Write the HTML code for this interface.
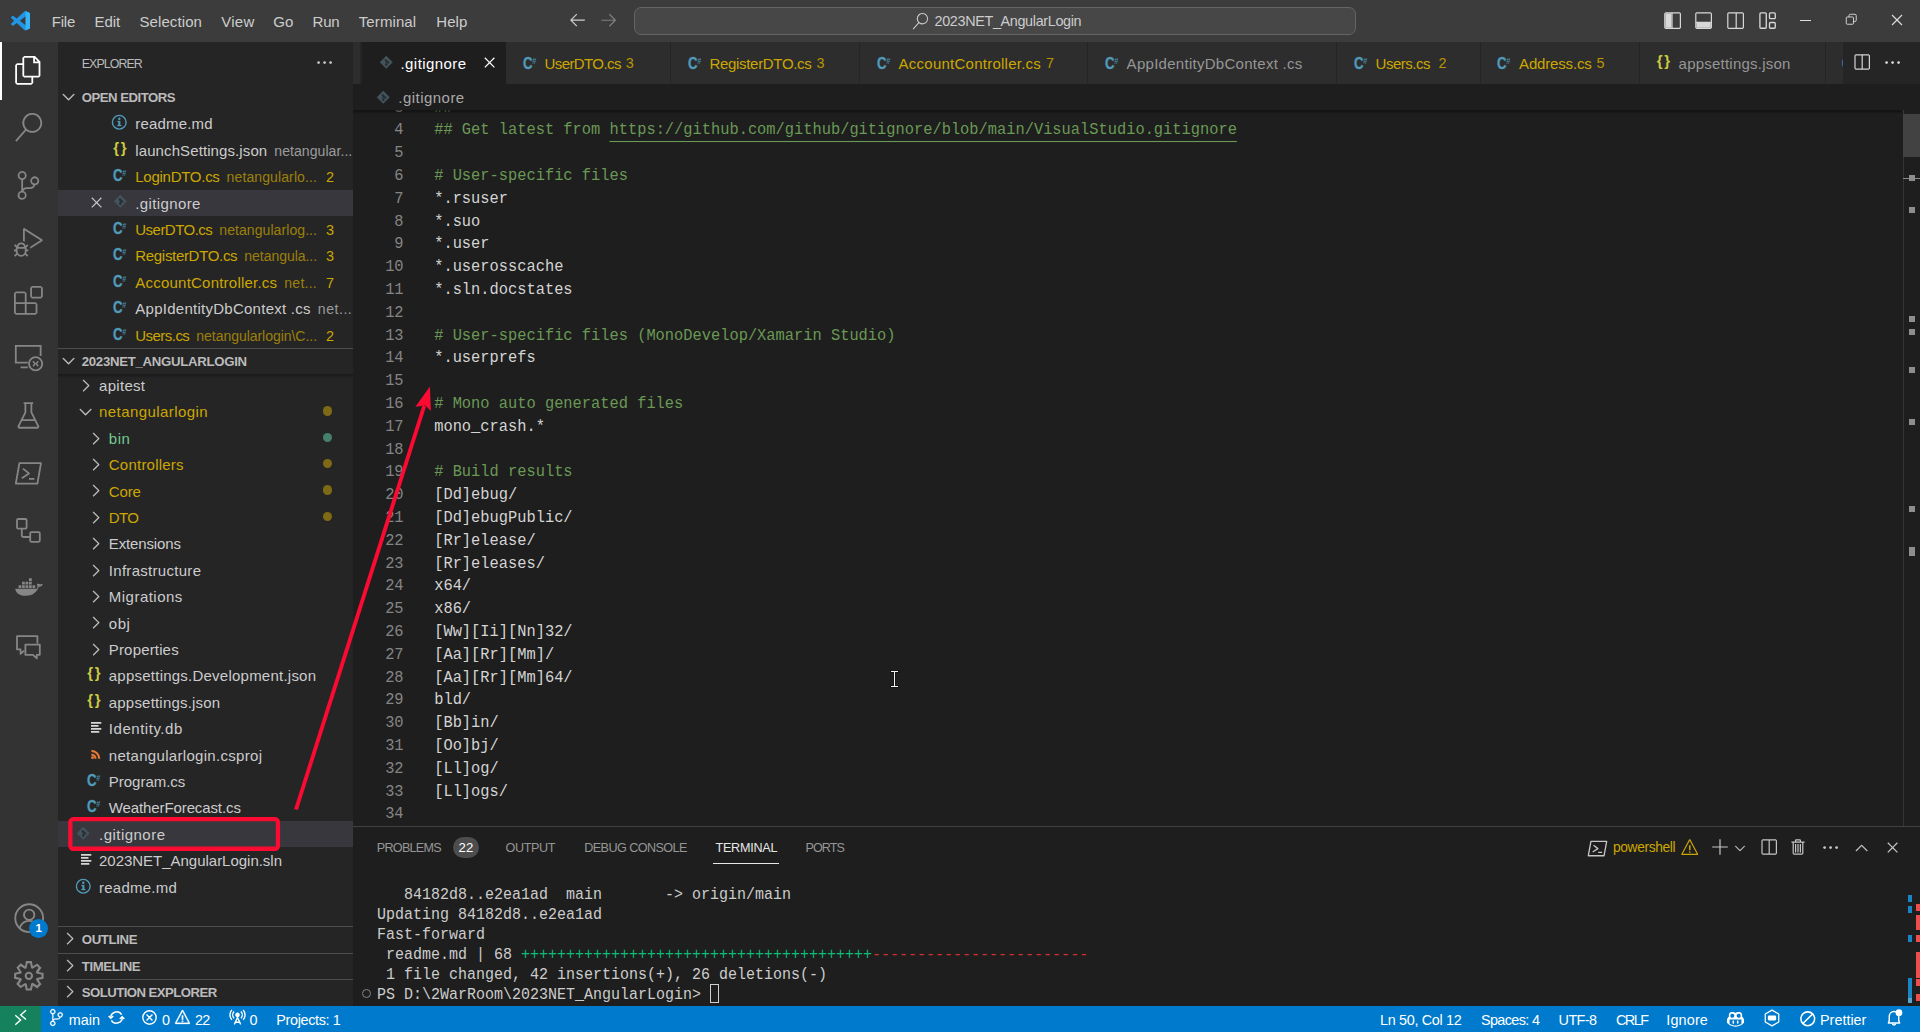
<!DOCTYPE html>
<html><head><meta charset="utf-8"><title>.gitignore - 2023NET_AngularLogin - Visual Studio Code</title>
<style>
*{box-sizing:border-box;margin:0;padding:0}
html,body{width:1920px;height:1032px;overflow:hidden;background:#1e1e1e}
body{position:relative;font-family:"Liberation Sans", sans-serif;font-size:15px;color:#ccc;-webkit-font-smoothing:antialiased}
.abs{position:absolute}
.t{position:absolute;white-space:pre;line-height:1}
.row{position:absolute;left:58px;width:295px;height:26.4px}
.row .t{top:1px;line-height:26.4px}
.tree .row .t{top:.7px}
.mono{font-family:"Liberation Mono", monospace}
.ln{position:absolute;left:353px;width:50.6px;text-align:right;color:#858585;font-family:"Liberation Mono", monospace;font-size:15.385px;line-height:22.800px;white-space:pre;transform:scaleY(1.1);transform-origin:50% 50%}
.cl{position:absolute;left:434.200px;color:#d4d4d4;font-family:"Liberation Mono", monospace;font-size:15.385px;line-height:22.800px;white-space:pre;transform:scaleY(1.1);transform-origin:0 50%}
.cm{color:#6a9955}
.tl{position:absolute;left:377px;color:#ccc;font-family:"Liberation Mono", monospace;font-size:15px;line-height:20px;white-space:pre;transform:scaleY(1.1);transform-origin:0 50%}
.sb{position:absolute;top:1005.600px;height:26.400px;line-height:28.600px;font-size:14.400px;color:#fff;white-space:pre}
.ci{font-weight:bold;color:#519aba;font-size:16.5px;letter-spacing:-.3px;margin-top:-4.1px;margin-left:.4px;transform:scaleX(.8);transform-origin:0 50%;-webkit-text-stroke:.35px #519aba}
.ci sup{font-size:9px;vertical-align:4.5px;margin-left:0;color:#4689a8;-webkit-text-stroke:0}
.js{font-weight:bold;color:#cbcb41;font-size:15px;letter-spacing:1.7px;margin-top:-3px;margin-left:.3px}
</style></head><body>

<div class="abs" style="left:0;top:0;width:1920px;height:42px;background:#3c3c3c"></div>
<svg viewBox="0 0 100 100" width="19.500" height="19.500" style="position:absolute;left:10.500px;top:11px"><path fill="#2196e6" fill-rule="evenodd" d="M70.912 99.317a6.223 6.223 0 0 0 4.960-.191l20.589-9.907A6.250 6.250 0 0 0 100 83.587V16.413a6.250 6.250 0 0 0-3.539-5.632L75.872.874a6.226 6.226 0 0 0-7.103 1.209L29.355 38.042L12.187 25.010a4.162 4.162 0 0 0-5.318.236l-5.506 5.009a4.168 4.168 0 0 0-.004 6.162L16.247 50L1.359 63.583a4.168 4.168 0 0 0 .004 6.162l5.506 5.009a4.162 4.162 0 0 0 5.318.236l17.168-13.032L68.769 97.917a6.217 6.217 0 0 0 2.143 1.400zM75.015 27.299L45.109 50l29.906 22.701V27.299z"></path><path fill="#35b5f7" d="M75.015 27.299V.6l.857.274l20.589 9.907A6.250 6.250 0 0 1 100 16.413v67.174a6.250 6.250 0 0 1-3.539 5.632L75.872 99.126l-.857.274z"></path></svg>
<span class="t mw" style="left: 51.75px; top: 14px; font-size: 15px; color: rgb(204, 204, 204); letter-spacing: -0.23px;">File</span>
<span class="t mw" style="left: 94.5px; top: 14px; font-size: 15px; color: rgb(204, 204, 204); letter-spacing: -0.09px;">Edit</span>
<span class="t mw" style="left: 139.5px; top: 14px; font-size: 15px; color: rgb(204, 204, 204); letter-spacing: 0.087px;">Selection</span>
<span class="t mw" style="left: 221.25px; top: 14px; font-size: 15px; color: rgb(204, 204, 204); letter-spacing: 0.25px;">View</span>
<span class="t mw" style="left: 273.25px; top: 14px; font-size: 15px; color: rgb(204, 204, 204); letter-spacing: -0.008px;">Go</span>
<span class="t mw" style="left: 312.5px; top: 14px; font-size: 15px; color: rgb(204, 204, 204); letter-spacing: -0.177px;">Run</span>
<span class="t mw" style="left: 358.75px; top: 14px; font-size: 15px; color: rgb(204, 204, 204); letter-spacing: 0.102px;">Terminal</span>
<span class="t mw" style="left: 436.25px; top: 14px; font-size: 15px; color: rgb(204, 204, 204); letter-spacing: 0.098px;">Help</span>
<svg viewBox="0 0 16 16" width="19.2" height="19.2" fill="currentColor" style="position:absolute;left:567.5px;top:10.3px;color:#d0d0d0;overflow:visible;"><path d="M7 3.093l-5 5V8.800l5 5l.707-.707l-4.146-4.147H14v-1H3.560L7.707 3.800L7 3.093z"></path></svg>
<svg viewBox="0 0 16 16" width="19.2" height="19.2" fill="currentColor" style="position:absolute;left:599px;top:10.3px;color:#7f7f7f;overflow:visible;"><path d="M9 13.887l5-5V8.180l-5-5l-.707.707l4.146 4.147H2v1h10.440L8.293 13.180l.707.707z"></path></svg>
<div class="abs" style="left:634px;top:7px;width:722px;height:27.600px;background:#474747;border:1px solid #646464;border-radius:7px"></div>
<svg viewBox="0 0 16 16" width="16.5" height="16.5" fill="currentColor" style="position:absolute;left:911.5px;top:12.5px;color:#ccc;overflow:visible;"><path d="M15.250 0a8.250 8.250 0 0 0-6.180 13.720L1 22.880l1.120 1l8.050-9.120A8.251 8.251 0 1 0 15.250.010V0zm0 15a6.750 6.750 0 1 1 0-13.500a6.750 6.750 0 0 1 0 13.500z" transform="scale(.6667)"></path></svg>
<span class="t mw" style="left: 934.5px; top: 14px; font-size: 14.4px; color: rgb(204, 204, 204); letter-spacing: -0.344px;">2023NET_AngularLogin</span>
<svg viewBox="0 0 16 16" width="19.2" height="19.2" fill="currentColor" style="position:absolute;left:1663px;top:11px;color:#d8d8d8;overflow:visible;"><path d="M2 1L1 2v12l1 1h12l1-1V2l-1-1H2zm0 13V2h5v12H2zm6 0V2h6v12H8z"></path><rect x="2" y="2" width="5" height="12"></rect></svg>
<svg viewBox="0 0 16 16" width="19.2" height="19.2" fill="currentColor" style="position:absolute;left:1694px;top:11px;color:#d8d8d8;overflow:visible;"><path d="M2 1L1 2v12l1 1h12l1-1V2l-1-1H2zm0 1h12v7H2V2zm0 12v-4h12v4H2z"></path><rect x="2" y="10" width="12" height="4"></rect></svg>
<svg viewBox="0 0 16 16" width="19.2" height="19.2" fill="currentColor" style="position:absolute;left:1725.8px;top:11px;color:#d8d8d8;overflow:visible;"><path d="M2 1L1 2v12l1 1h12l1-1V2l-1-1H2zm0 13V2h6v12H2zm7 0V2h5v12H9z"></path></svg>
<svg viewBox="0 0 16 16" width="19.2" height="19.2" fill="currentColor" style="position:absolute;left:1757.5px;top:11px;color:#d8d8d8;overflow:visible;"><g fill="none" stroke="currentColor" stroke-width="1.100"><rect x="1.600" y="1.600" width="5.300" height="12.800" rx=".8"></rect><rect x="9.600" y="1.600" width="4.800" height="4.800" rx=".8"></rect><rect x="9.600" y="9.600" width="4.800" height="4.800" rx=".8"></rect></g></svg>
<div class="abs" style="left:1800px;top:20px;width:10.500px;height:1px;background:#ddd"></div>
<svg viewBox="0 0 16 16" width="14.5" height="14.5" fill="currentColor" style="position:absolute;left:1843.7px;top:12.4px;color:#ddd;overflow:visible;"><g fill="none" stroke="currentColor" stroke-width="1"><rect x="2.500" y="5.500" width="8" height="8" rx="1"></rect><path d="M5.500 5.500v-1.500a1.500 1.500 0 0 1 1.500-1.500h5a1.500 1.500 0 0 1 1.500 1.500v5a1.500 1.500 0 0 1-1.500 1.500h-1.500"></path></g></svg>
<svg width="12" height="12" viewBox="0 0 12 12" style="position:absolute;left:1891.300px;top:14px"><path d="M1 1l10 10M11 1L1 11" stroke="#e0e0e0" stroke-width="1.100" fill="none"></path></svg>
<div class="abs" style="left:0;top:42px;width:58px;height:963.600px;background:#333"></div>
<div class="abs" style="left:0;top:42px;width:2.400px;height:57.600px;background:#fff"></div>
<svg viewBox="0 0 24 24" width="28.8" height="28.8" fill="currentColor" style="position:absolute;left:14.4px;top:55.599999999999994px;color:#fff;overflow:visible;"><path d="M17.5 0h-9L7 1.5V6H2.5L1 7.5v15.07L2.5 24h12.07L16 22.57V18h4.7l1.3-1.43V4.5L17.5 0zm0 2.12l2.38 2.38H17.5V2.12zm-3 20.38h-12v-15H7v9.07L8.5 18h6v4.5zm6-6h-12v-15H16V6h4.5v10.5z"></path></svg>
<svg viewBox="0 0 24 24" width="28.8" height="28.8" fill="currentColor" style="position:absolute;left:14.4px;top:113.2px;color:#868686;overflow:visible;"><path d="M15.25 0a8.25 8.25 0 0 0-6.18 13.72L1 22.88l1.12 1l8.05-9.12A8.251 8.251 0 1 0 15.25.01V0zm0 15a6.75 6.75 0 1 1 0-13.5a6.75 6.75 0 0 1 0 13.5z"></path></svg>
<svg viewBox="0 0 24 24" width="28.8" height="28.8" fill="currentColor" style="position:absolute;left:14.4px;top:170.8px;color:#868686;overflow:visible;"><path d="M21.007 8.222A3.738 3.738 0 0 0 15.045 5.2a3.737 3.737 0 0 0 1.156 6.583a2.988 2.988 0 0 1-2.668 1.67h-2.99a4.456 4.456 0 0 0-2.989 1.165V7.4a3.737 3.737 0 1 0-1.494 0v9.117a3.776 3.776 0 1 0 1.816.099a2.99 2.99 0 0 1 2.668-1.667h2.99a4.484 4.484 0 0 0 4.223-3.039a3.736 3.736 0 0 0 3.25-3.687zM4.565 3.738a2.242 2.242 0 1 1 4.484 0a2.242 2.242 0 0 1-4.484 0zm4.484 16.441a2.242 2.242 0 1 1-4.484 0a2.242 2.242 0 0 1 4.484 0zm8.221-9.715a2.242 2.242 0 1 1 0-4.485a2.242 2.242 0 0 1 0 4.485z"></path></svg>
<svg viewBox="0 0 24 24" width="28.8" height="28.8" fill="currentColor" style="position:absolute;left:14.4px;top:228.40000000000003px;color:#868686;overflow:visible;"><path d="M10.94 13.5l-1.32 1.32a3.73 3.73 0 0 0-7.24 0L1.06 13.5L0 14.56l1.72 1.72l-.22.22V18H0v1.5h1.5v.08c.077.489.214.966.41 1.42L0 22.94L1.06 24l1.65-1.65A4.308 4.308 0 0 0 6 24a4.31 4.31 0 0 0 3.29-1.65L10.94 24L12 22.94L10.09 21c.198-.464.336-.951.41-1.45v-.1H12V18h-1.5v-1.5l-.22-.22L12 14.56l-1.06-1.06zM6 13.5a2.25 2.25 0 0 1 2.25 2.25h-4.5A2.25 2.25 0 0 1 6 13.5zm3 6a3.33 3.33 0 0 1-3 3a3.33 3.33 0 0 1-3-3v-2.25h6v2.25zm14.76-9.9v1.26L13.5 17.37V15.6l8.5-5.37L9 2v9.46a5.07 5.07 0 0 0-1.5-.72V.63L8.64 0l15.12 9.6z"></path></svg>
<svg viewBox="0 0 24 24" width="28.8" height="28.8" fill="currentColor" style="position:absolute;left:14.4px;top:286.0px;color:#868686;overflow:visible;"><path d="M13.5 1.5L15 0h7.5L24 1.5V9l-1.5 1.5H15L13.5 9V1.5zm1.5 0V9h7.5V1.5H15zM0 15V6l1.5-1.5H9L10.5 6v7.5H18l1.5 1.5v7.5L18 24H1.5L0 22.5V15zm9-1.5V6H1.5v7.5H9zM9 15H1.5v7.5H9V15zm1.5 7.5H18V15h-7.5v7.5z"></path></svg>
<svg viewBox="0 0 24 24" width="28.8" height="28.8" fill="currentColor" style="position:absolute;left:14.4px;top:343.6px;color:#868686;overflow:visible;"><g fill="none" stroke="currentColor" stroke-width="1.5"><path d="M22.2 10V1.5H1.5v14h10M5.500 19.5h6"></path><circle cx="18" cy="16.5" r="5.5"></circle><path d="M15.800 14.400l1.800 2.100l-1.800 2.100M20.200 14.400l-1.800 2.100l1.800 2.100" stroke-width="1.2"></path></g></svg>
<svg viewBox="0 0 24 24" width="28.8" height="28.8" fill="currentColor" style="position:absolute;left:14.4px;top:401.20000000000005px;color:#868686;overflow:visible;"><g fill="none" stroke="currentColor" stroke-width="1.5" stroke-linejoin="round"><path d="M8 1.8h8M9.5 2v7.5L3.6 21.3l.6 1h15.6l.6-1L14.5 9.500V2M6.5 16h11"></path></g></svg>
<svg viewBox="0 0 24 24" width="28.8" height="28.8" fill="currentColor" style="position:absolute;left:14.4px;top:458.8px;color:#868686;overflow:visible;"><g fill="none" stroke="currentColor" stroke-width="1.5" stroke-linejoin="round"><path d="M4.500 3.500h18l-3 17h-18z"></path><path d="M7.500 8l5 4l-6 4M12.500 16.500h4.500"></path></g></svg>
<svg viewBox="0 0 24 24" width="28.8" height="28.8" fill="currentColor" style="position:absolute;left:14.4px;top:516.4px;color:#868686;overflow:visible;"><g fill="none" stroke="currentColor" stroke-width="1.5" stroke-linejoin="round"><rect x="2.500" y="2.500" width="8" height="8" rx="1"></rect><rect x="13.500" y="13.500" width="8" height="8" rx="1"></rect><path d="M6.500 10.500v5.500a1.500 1.500 0 0 0 1.500 1.500h5.500"></path></g></svg>
<svg viewBox="0 0 24 24" width="28.8" height="28.8" fill="currentColor" style="position:absolute;left:14.4px;top:573.9999999999999px;color:#868686;overflow:visible;"><g><path d="M1 12.200h18.300c.5-1.700.2-2.900-.3-3.700c.8-.7 2.300-.3 2.900.3c.6-.4 1.500-.5 2.100-.2c-.5 1.400-1.900 2.100-3.300 2.100c-1.700 4.700-5.200 7.500-10.700 7.500c-5.200 0-8.600-2.400-9-6z"></path><path d="M3.800 9.300h2.300v2.300H3.800zM6.700 9.300H9v2.300H6.700zM9.600 9.300h2.300v2.300H9.600zM12.500 9.300h2.300v2.300h-2.300zM6.700 6.400H9v2.300H6.700zM9.600 6.400h2.300v2.300H9.600zM12.500 6.400h2.300v2.300h-2.300zM12.500 3.500h2.300v2.300h-2.300zM15.400 9.300h2.300v2.300h-2.300z"></path></g></svg>
<svg viewBox="0 0 24 24" width="28.8" height="28.8" fill="currentColor" style="position:absolute;left:14.4px;top:631.5999999999999px;color:#868686;overflow:visible;"><g fill="none" stroke="currentColor" stroke-width="1.500" stroke-linejoin="round"><path d="M19.500 9.500V3.500h-17v11h3v3.800l3-2.800"></path><path d="M9.500 10.500h12v8.500h-2.500v3l-3.200-3H9.500z"></path></g></svg>
<svg viewBox="0 0 24 24" width="30.4" height="30.4" fill="currentColor" style="position:absolute;left:13.6px;top:902.8px;color:#868686;overflow:visible;"><g fill="none" stroke="currentColor" stroke-width="1.500"><circle cx="12" cy="12" r="11"></circle><circle cx="12" cy="9.300" r="4.100"></circle><path d="M4.600 20c1-3.800 3.800-5.900 7.400-5.900s6.400 2.100 7.400 5.900"></path></g></svg>
<svg viewBox="0 0 24 24" width="33.7" height="33.7" fill="currentColor" style="position:absolute;left:11.95px;top:958.75px;color:#868686;overflow:visible;"><path transform="scale(1.5)" fill-rule="evenodd" d="M9.100 4.400L8.600 2H7.400l-.5 2.400l-.7.300l-2-1.300l-.9.800l1.300 2l-.2.700l-2.400.5v1.200l2.400.5l.3.800l-1.300 2l.8.800l2-1.300l.8.300l.4 2.300h1.200l.5-2.400l.8-.3l2 1.300l.8-.8l-1.300-2l.3-.8l2.300-.4V7.400l-2.400-.5l-.3-.8l1.300-2l-.8-.8l-2 1.300l-.7-.2zM9.400 1l.5 2.400L12 2.100l2 2l-1.400 2.100l2.400.4v2.800l-2.400.5L14 12l-2 2l-2.100-1.400l-.5 2.400H6.600l-.5-2.400L4 13.900l-2-2l1.400-2.100L1 9.400V6.600l2.400-.5L2.100 4l2-2l2.100 1.400l.4-2.400h2.800zm.6 7c0 1.100-.9 2-2 2s-2-.9-2-2s.9-2 2-2s2 .9 2 2zM8 9c.6 0 1-.4 1-1s-.4-1-1-1s-1 .4-1 1s.4 1 1 1z"></path></svg>
<div class="abs" style="left:29.200px;top:919px;width:18.800px;height:18.800px;border-radius:50%;background:#007acc;color:#fff;font-size:11.500px;font-weight:bold;text-align:center;line-height:19px">1</div>
<div class="abs" style="left:58px;top:42px;width:295px;height:963.600px;background:#252526"></div>
<span class="t mw" style="left: 81.75px; top: 58px; font-size: 12.4px; color: rgb(187, 187, 187); letter-spacing: -0.936px;">EXPLORER</span>
<svg viewBox="0 0 16 16" width="19.2" height="19.2" fill="currentColor" style="position:absolute;left:315px;top:53px;color:#c5c5c5;overflow:visible;"><circle cx="3" cy="8" r="1.15"></circle><circle cx="8" cy="8" r="1.15"></circle><circle cx="13" cy="8" r="1.15"></circle></svg>
<svg viewBox="0 0 16 16" width="19.2" height="19.2" fill="currentColor" style="position:absolute;left:59.3px;top:86.7px;color:#c5c5c5;overflow:visible;"><path stroke="currentColor" stroke-width=".25" d="M7.976 10.072l4.357-4.357l.62.618L8.284 11h-.618L3 6.333l.619-.618l4.357 4.357z"></path></svg><span class="t mw" style="left: 81.75px; top: 84px; line-height: 28.8px; font-size: 13.2px; font-weight: bold; color: rgb(187, 187, 187); letter-spacing: -0.518px;">OPEN EDITORS</span>
<div class="row" style="top:110.4px;">
<svg viewBox="0 0 16 16" width="16.5" height="16.5" fill="currentColor" style="position:absolute;left:53px;top:4.0px"><circle cx="8" cy="8" r="6.65" fill="none" stroke="#519aba" stroke-width="1.35"></circle><rect x="7.1" y="6.7" width="2" height="4.9" fill="#519aba"></rect><rect x="6.2" y="6.700" width="2.5" height="1.2" fill="#519aba"></rect><rect x="6.1" y="10.6" width="4" height="1.2" fill="#519aba"></rect><circle cx="8" cy="4.5" r="1.2" fill="#519aba"></circle></svg>
<span class="t mw" style="left: 77.3px; color: rgb(204, 204, 204); letter-spacing: 0.169px;">readme.md</span>
</div>
<div class="row" style="top:136.8px;">
<span class="t js" style="left:55px">{}</span>
<span class="t mw" style="left: 77.3px; color: rgb(204, 204, 204); letter-spacing: 0.1px;">launchSettings.json</span>
<span class="t dsc" style="left: 216.3px; font-size: 14.04px; color: rgb(204, 204, 204); opacity: 0.7; letter-spacing: 0.059px;">netangular...</span>
</div>
<div class="row" style="top:163.2px;">
<span class="t ci" style="left:55px">C<sup>#</sup></span>
<span class="t mw" style="left: 77.3px; color: rgb(204, 167, 0); letter-spacing: -0.27px;">LoginDTO.cs</span>
<span class="t dsc" style="left: 168.6px; font-size: 14.04px; color: rgb(204, 167, 0); opacity: 0.7; letter-spacing: 0.098px;">netangularlo...</span>
<span class="t" style="left:268px;font-size:14.400px;color:#cca700">2</span>
</div>
<div class="row" style="top:189.6px;background:#37373d;">
<svg viewBox="0 0 16 16" width="19.2" height="19.2" fill="currentColor" style="position:absolute;left:28.5px;top:3.6px;color:#c5c5c5;overflow:visible;"><path d="M8 8.707l3.646 3.647l.708-.707L8.707 8l3.647-3.646l-.707-.708L8 7.293L4.354 3.646l-.707.708L7.293 8l-3.646 3.646l.707.708L8 8.707z"></path></svg>
<svg viewBox="0 0 16 16" width="14.5" height="14.5" fill="currentColor" style="position:absolute;left:54.5px;top:4.5px"><path fill="#41535b" d="M8 .800l7.200 7.200L8 15.200L.800 8z"></path><g stroke="#2a2a2e" stroke-width="1.100" fill="#2a2a2e"><path d="M6.200 4.600l3.600 3.600M8 6.400v4.200" fill="none"></path><circle cx="8" cy="6.300" r=".900"></circle><circle cx="8" cy="10.700" r=".900"></circle><circle cx="10" cy="8.300" r=".900"></circle></g></svg>
<span class="t mw" style="left: 77.3px; color: rgb(204, 204, 204); letter-spacing: 0.378px;">.gitignore</span>
</div>
<div class="row" style="top:216.0px;">
<span class="t ci" style="left:55px">C<sup>#</sup></span>
<span class="t mw" style="left: 77.3px; color: rgb(204, 167, 0); letter-spacing: -0.523px;">UserDTO.cs</span>
<span class="t dsc" style="left: 161.3px; font-size: 14.04px; color: rgb(204, 167, 0); opacity: 0.7; letter-spacing: 0.061px;">netangularlog...</span>
<span class="t" style="left:268px;font-size:14.400px;color:#cca700">3</span>
</div>
<div class="row" style="top:242.4px;">
<span class="t ci" style="left:55px">C<sup>#</sup></span>
<span class="t mw" style="left: 77.3px; color: rgb(204, 167, 0); letter-spacing: -0.316px;">RegisterDTO.cs</span>
<span class="t dsc" style="left: 186.3px; font-size: 14.04px; color: rgb(204, 167, 0); opacity: 0.7; letter-spacing: -0.053px;">netangula...</span>
<span class="t" style="left:268px;font-size:14.400px;color:#cca700">3</span>
</div>
<div class="row" style="top:268.79999999999995px;">
<span class="t ci" style="left:55px">C<sup>#</sup></span>
<span class="t mw" style="left: 77.3px; color: rgb(204, 167, 0); letter-spacing: 0.221px;">AccountController.cs</span>
<span class="t dsc" style="left: 226.3px; font-size: 14.04px; color: rgb(204, 167, 0); opacity: 0.7; letter-spacing: 0.25px;">net...</span>
<span class="t" style="left:268px;font-size:14.400px;color:#cca700">7</span>
</div>
<div class="row" style="top:295.2px;">
<span class="t ci" style="left:55px">C<sup>#</sup></span>
<span class="t mw" style="left: 77.3px; color: rgb(204, 204, 204); letter-spacing: 0.26px;">AppIdentityDbContext .cs</span>
<span class="t dsc" style="left: 259.8px; font-size: 14.04px; color: rgb(204, 204, 204); opacity: 0.7; letter-spacing: 0.55px;">net...</span>
</div>
<div class="row" style="top:321.6px;">
<span class="t ci" style="left:55px">C<sup>#</sup></span>
<span class="t mw" style="left: 77.3px; color: rgb(204, 167, 0); letter-spacing: -0.543px;">Users.cs</span>
<span class="t dsc" style="left: 138.3px; font-size: 14.04px; color: rgb(204, 167, 0); opacity: 0.7; letter-spacing: -0.049px;">netangularlogin\C...</span>
<span class="t" style="left:268px;font-size:14.400px;color:#cca700">2</span>
</div>
<div class="abs" style="left:58px;top:348px;width:295px;height:1px;background:#4d4d4e"></div><svg viewBox="0 0 16 16" width="19.2" height="19.2" fill="currentColor" style="position:absolute;left:59.3px;top:350.7px;color:#c5c5c5;overflow:visible;"><path stroke="currentColor" stroke-width=".25" d="M7.976 10.072l4.357-4.357l.62.618L8.284 11h-.618L3 6.333l.619-.618l4.357 4.357z"></path></svg><span class="t mw" style="left: 81.75px; top: 348px; line-height: 28.8px; font-size: 13.2px; font-weight: bold; color: rgb(187, 187, 187); letter-spacing: -0.287px;">2023NET_ANGULARLOGIN</span>
<div class="abs" style="left:58px;top:374.400px;width:295px;height:552px;overflow:hidden">
<div class="abs tree" style="left:0;top:-2.100px;width:295px;height:560px">
<div class="row" style="left:0;top:0.0px;">
<svg viewBox="0 0 16 16" width="19.2" height="19.2" fill="currentColor" style="position:absolute;left:18.3px;top:3.6px;color:#c5c5c5;overflow:visible;"><path stroke="currentColor" stroke-width=".25" d="M10.072 8.024L5.715 3.667l.618-.62L11 7.716v.618L6.333 13l-.618-.619l4.357-4.357z"></path></svg>
<span class="t mw" style="left: 41px; color: rgb(204, 204, 204); letter-spacing: 0.3px;">apitest</span>
</div>
<div class="row" style="left:0;top:26.4px;">
<svg viewBox="0 0 16 16" width="19.2" height="19.2" fill="currentColor" style="position:absolute;left:17.7px;top:3.6px;color:#c5c5c5;overflow:visible;"><path stroke="currentColor" stroke-width=".25" d="M7.976 10.072l4.357-4.357l.62.618L8.284 11h-.618L3 6.333l.619-.618l4.357 4.357z"></path></svg>
<span class="t mw" style="left: 41px; color: rgb(204, 167, 0); letter-spacing: 0.427px;">netangularlogin</span>
<div class="abs" style="left:265.1px;top:7.500px;width:9.400px;height:9.400px;border-radius:50%;background:#7e6a14"></div>
</div>
<div class="row" style="left:0;top:52.8px;">
<svg viewBox="0 0 16 16" width="19.2" height="19.2" fill="currentColor" style="position:absolute;left:28.099999999999998px;top:3.6px;color:#c5c5c5;overflow:visible;"><path stroke="currentColor" stroke-width=".25" d="M10.072 8.024L5.715 3.667l.618-.62L11 7.716v.618L6.333 13l-.618-.619l4.357-4.357z"></path></svg>
<span class="t mw" style="left: 50.8px; color: rgb(115, 201, 145); letter-spacing: 0.49px;">bin</span>
<div class="abs" style="left:265.1px;top:7.500px;width:9.400px;height:9.400px;border-radius:50%;background:#46806a"></div>
</div>
<div class="row" style="left:0;top:79.19999999999999px;">
<svg viewBox="0 0 16 16" width="19.2" height="19.2" fill="currentColor" style="position:absolute;left:28.099999999999998px;top:3.6px;color:#c5c5c5;overflow:visible;"><path stroke="currentColor" stroke-width=".25" d="M10.072 8.024L5.715 3.667l.618-.62L11 7.716v.618L6.333 13l-.618-.619l4.357-4.357z"></path></svg>
<span class="t mw" style="left: 50.8px; color: rgb(204, 167, 0); letter-spacing: 0.224px;">Controllers</span>
<div class="abs" style="left:265.1px;top:7.500px;width:9.400px;height:9.400px;border-radius:50%;background:#7e6a14"></div>
</div>
<div class="row" style="left:0;top:105.6px;">
<svg viewBox="0 0 16 16" width="19.2" height="19.2" fill="currentColor" style="position:absolute;left:28.099999999999998px;top:3.6px;color:#c5c5c5;overflow:visible;"><path stroke="currentColor" stroke-width=".25" d="M10.072 8.024L5.715 3.667l.618-.62L11 7.716v.618L6.333 13l-.618-.619l4.357-4.357z"></path></svg>
<span class="t mw" style="left: 50.8px; color: rgb(204, 167, 0); letter-spacing: -0.129px;">Core</span>
<div class="abs" style="left:265.1px;top:7.500px;width:9.400px;height:9.400px;border-radius:50%;background:#7e6a14"></div>
</div>
<div class="row" style="left:0;top:132.0px;">
<svg viewBox="0 0 16 16" width="19.2" height="19.2" fill="currentColor" style="position:absolute;left:28.099999999999998px;top:3.6px;color:#c5c5c5;overflow:visible;"><path stroke="currentColor" stroke-width=".25" d="M10.072 8.024L5.715 3.667l.618-.62L11 7.716v.618L6.333 13l-.618-.619l4.357-4.357z"></path></svg>
<span class="t mw" style="left: 50.8px; color: rgb(204, 167, 0); letter-spacing: -0.635px;">DTO</span>
<div class="abs" style="left:265.1px;top:7.500px;width:9.400px;height:9.400px;border-radius:50%;background:#7e6a14"></div>
</div>
<div class="row" style="left:0;top:158.39999999999998px;">
<svg viewBox="0 0 16 16" width="19.2" height="19.2" fill="currentColor" style="position:absolute;left:28.099999999999998px;top:3.6px;color:#c5c5c5;overflow:visible;"><path stroke="currentColor" stroke-width=".25" d="M10.072 8.024L5.715 3.667l.618-.62L11 7.716v.618L6.333 13l-.618-.619l4.357-4.357z"></path></svg>
<span class="t mw" style="left: 50.8px; color: rgb(204, 204, 204); letter-spacing: -0.138px;">Extensions</span>
</div>
<div class="row" style="left:0;top:184.79999999999998px;">
<svg viewBox="0 0 16 16" width="19.2" height="19.2" fill="currentColor" style="position:absolute;left:28.099999999999998px;top:3.6px;color:#c5c5c5;overflow:visible;"><path stroke="currentColor" stroke-width=".25" d="M10.072 8.024L5.715 3.667l.618-.62L11 7.716v.618L6.333 13l-.618-.619l4.357-4.357z"></path></svg>
<span class="t mw" style="left: 50.8px; color: rgb(204, 204, 204); letter-spacing: 0.295px;">Infrastructure</span>
</div>
<div class="row" style="left:0;top:211.2px;">
<svg viewBox="0 0 16 16" width="19.2" height="19.2" fill="currentColor" style="position:absolute;left:28.099999999999998px;top:3.6px;color:#c5c5c5;overflow:visible;"><path stroke="currentColor" stroke-width=".25" d="M10.072 8.024L5.715 3.667l.618-.62L11 7.716v.618L6.333 13l-.618-.619l4.357-4.357z"></path></svg>
<span class="t mw" style="left: 50.8px; color: rgb(204, 204, 204); letter-spacing: 0.48px;">Migrations</span>
</div>
<div class="row" style="left:0;top:237.6px;">
<svg viewBox="0 0 16 16" width="19.2" height="19.2" fill="currentColor" style="position:absolute;left:28.099999999999998px;top:3.6px;color:#c5c5c5;overflow:visible;"><path stroke="currentColor" stroke-width=".25" d="M10.072 8.024L5.715 3.667l.618-.62L11 7.716v.618L6.333 13l-.618-.619l4.357-4.357z"></path></svg>
<span class="t mw" style="left: 50.8px; color: rgb(204, 204, 204); letter-spacing: 0.49px;">obj</span>
</div>
<div class="row" style="left:0;top:264.0px;">
<svg viewBox="0 0 16 16" width="19.2" height="19.2" fill="currentColor" style="position:absolute;left:28.099999999999998px;top:3.6px;color:#c5c5c5;overflow:visible;"><path stroke="currentColor" stroke-width=".25" d="M10.072 8.024L5.715 3.667l.618-.62L11 7.716v.618L6.333 13l-.618-.619l4.357-4.357z"></path></svg>
<span class="t mw" style="left: 50.8px; color: rgb(204, 204, 204); letter-spacing: 0.163px;">Properties</span>
</div>
<div class="row" style="left:0;top:290.4px;">
<span class="t js" style="left:28.999999999999996px">{}</span>
<span class="t mw" style="left: 50.8px; color: rgb(204, 204, 204); letter-spacing: 0.233px;">appsettings.Development.json</span>
</div>
<div class="row" style="left:0;top:316.79999999999995px;">
<span class="t js" style="left:28.999999999999996px">{}</span>
<span class="t mw" style="left: 50.8px; color: rgb(204, 204, 204); letter-spacing: 0.193px;">appsettings.json</span>
</div>
<div class="row" style="left:0;top:343.2px;">
<svg viewBox="0 0 11 11" width="11" height="11" fill="currentColor" style="position:absolute;left:32.699999999999996px;top:6.8px"><path d="M0 .9h10.3M0 3.9h7.5M0 6.9h10.3M0 9.9h8.3" stroke="#d4d7d6" stroke-width="1.7" fill="none"></path></svg>
<span class="t mw" style="left: 50.8px; color: rgb(204, 204, 204); letter-spacing: 0.536px;">Identity.db</span>
</div>
<div class="row" style="left:0;top:369.59999999999997px;">
<svg viewBox="0 0 16 16" width="13" height="13" fill="currentColor" style="position:absolute;left:30.799999999999997px;top:6.5px"><g fill="none" stroke="#e37933" stroke-width="2.700"><path d="M3 8.200a5 5 0 0 1 5 5M3 3.600a9.600 9.600 0 0 1 9.600 9.600"></path></g><circle cx="4.300" cy="12" r="1.700" fill="#e37933"></circle></svg>
<span class="t mw" style="left: 50.8px; color: rgb(204, 204, 204); letter-spacing: 0.306px;">netangularlogin.csproj</span>
</div>
<div class="row" style="left:0;top:396.0px;">
<span class="t ci" style="left:28.299999999999997px">C<sup>#</sup></span>
<span class="t mw" style="left: 50.8px; color: rgb(204, 204, 204); letter-spacing: -0.019px;">Program.cs</span>
</div>
<div class="row" style="left:0;top:422.4px;">
<span class="t ci" style="left:28.299999999999997px">C<sup>#</sup></span>
<span class="t mw" style="left: 50.8px; color: rgb(204, 204, 204); letter-spacing: -0.109px;">WeatherForecast.cs</span>
</div>
<div class="row" style="left:0;top:448.79999999999995px;background:#37373d;">
<svg viewBox="0 0 16 16" width="14.5" height="14.5" fill="currentColor" style="position:absolute;left:18.2px;top:4.5px"><path fill="#41535b" d="M8 .800l7.200 7.200L8 15.200L.800 8z"></path><g stroke="#2a2a2e" stroke-width="1.100" fill="#2a2a2e"><path d="M6.200 4.600l3.600 3.600M8 6.400v4.200" fill="none"></path><circle cx="8" cy="6.300" r=".900"></circle><circle cx="8" cy="10.700" r=".900"></circle><circle cx="10" cy="8.300" r=".900"></circle></g></svg>
<span class="t mw" style="left: 41px; color: rgb(204, 204, 204); letter-spacing: 0.478px;">.gitignore</span>
</div>
<div class="row" style="left:0;top:475.2px;">
<svg viewBox="0 0 11 11" width="11" height="11" fill="currentColor" style="position:absolute;left:22.9px;top:6.8px"><path d="M0 .9h10.3M0 3.9h7.5M0 6.9h10.3M0 9.9h8.3" stroke="#d4d7d6" stroke-width="1.7" fill="none"></path></svg>
<span class="t mw" style="left: 41px; color: rgb(204, 204, 204); letter-spacing: -0.02px;">2023NET_AngularLogin.sln</span>
</div>
<div class="row" style="left:0;top:501.59999999999997px;">
<svg viewBox="0 0 16 16" width="16.5" height="16.5" fill="currentColor" style="position:absolute;left:17.2px;top:3.7px"><circle cx="8" cy="8" r="6.65" fill="none" stroke="#519aba" stroke-width="1.35"></circle><rect x="7.1" y="6.7" width="2" height="4.9" fill="#519aba"></rect><rect x="6.2" y="6.700" width="2.5" height="1.2" fill="#519aba"></rect><rect x="6.1" y="10.6" width="4" height="1.2" fill="#519aba"></rect><circle cx="8" cy="4.5" r="1.2" fill="#519aba"></circle></svg>
<span class="t mw" style="left: 41px; color: rgb(204, 204, 204); letter-spacing: 0.236px;">readme.md</span>
</div>
</div>
<div class="abs" style="left:0;top:0;width:295px;height:4px;background:linear-gradient(#00000050,#00000038 40%,#00000000)"></div>
</div>
<div class="abs" style="left:58px;top:926.4px;width:295px;height:1px;background:#4d4d4e"></div><svg viewBox="0 0 16 16" width="19.2" height="19.2" fill="currentColor" style="position:absolute;left:59.8px;top:929.1px;color:#c5c5c5;overflow:visible;"><path stroke="currentColor" stroke-width=".25" d="M10.072 8.024L5.715 3.667l.618-.62L11 7.716v.618L6.333 13l-.618-.619l4.357-4.357z"></path></svg><span class="t mw" style="left: 81.75px; top: 926.4px; line-height: 28.8px; font-size: 13.2px; font-weight: bold; color: rgb(187, 187, 187); letter-spacing: -0.342px;">OUTLINE</span>
<div class="abs" style="left:58px;top:952.8px;width:295px;height:1px;background:#4d4d4e"></div><svg viewBox="0 0 16 16" width="19.2" height="19.2" fill="currentColor" style="position:absolute;left:59.8px;top:955.5px;color:#c5c5c5;overflow:visible;"><path stroke="currentColor" stroke-width=".25" d="M10.072 8.024L5.715 3.667l.618-.62L11 7.716v.618L6.333 13l-.618-.619l4.357-4.357z"></path></svg><span class="t mw" style="left: 81.75px; top: 952.8px; line-height: 28.8px; font-size: 13.2px; font-weight: bold; color: rgb(187, 187, 187); letter-spacing: -0.381px;">TIMELINE</span>
<div class="abs" style="left:58px;top:979.2px;width:295px;height:1px;background:#4d4d4e"></div><svg viewBox="0 0 16 16" width="19.2" height="19.2" fill="currentColor" style="position:absolute;left:59.8px;top:981.9000000000001px;color:#c5c5c5;overflow:visible;"><path stroke="currentColor" stroke-width=".25" d="M10.072 8.024L5.715 3.667l.618-.62L11 7.716v.618L6.333 13l-.618-.619l4.357-4.357z"></path></svg><span class="t mw" style="left: 81.75px; top: 979.2px; line-height: 28.8px; font-size: 13.2px; font-weight: bold; color: rgb(187, 187, 187); letter-spacing: -0.55px;">SOLUTION EXPLORER</span>
<div class="abs" style="left:353px;top:42px;width:1567px;height:42px;background:#252526"></div>
<div class="abs" style="left:353px;top:42px;width:7.400px;height:42px;background:#2d2d2d"></div>
<div class="abs" style="left:362.0px;top:42px;width:144.0px;height:42px;background:#1e1e1e;overflow:hidden;font-size:15px">
<svg viewBox="0 0 16 16" width="14.5" height="14.5" fill="currentColor" style="position:absolute;left:16.6px;top:12.8px"><path fill="#41535b" d="M8 .800l7.200 7.200L8 15.200L.800 8z"></path><g stroke="#2a2a2e" stroke-width="1.100" fill="#2a2a2e"><path d="M6.200 4.600l3.600 3.600M8 6.400v4.200" fill="none"></path><circle cx="8" cy="6.300" r=".900"></circle><circle cx="8" cy="10.700" r=".900"></circle><circle cx="10" cy="8.300" r=".900"></circle></g></svg>
<span class="t mw" style="left: 38.5px; top: 0px; line-height: 43px; color: rgb(255, 255, 255); letter-spacing: 0.428px;">.gitignore</span>
<svg viewBox="0 0 16 16" width="19.2" height="19.2" fill="currentColor" style="position:absolute;left:117.5px;top:11.4px;color:#fff;overflow:visible;"><path d="M8 8.707l3.646 3.647l.708-.707L8.707 8l3.647-3.646l-.707-.708L8 7.293L4.354 3.646l-.707.708L7.293 8l-3.646 3.646l.707.708L8 8.707z"></path></svg>
</div>
<div class="abs" style="left:506.0px;top:42px;width:164.0px;height:42px;background:#2d2d2d;overflow:hidden;font-size:15px">
<span class="t ci" style="left:16.3px;top:0;line-height:46px">C<sup>#</sup></span>
<span class="t mw" style="left: 38.5px; top: 0px; line-height: 43px; color: rgb(204, 167, 0); letter-spacing: -0.593px;">UserDTO.cs</span>
<span class="t" style="left:119.8px;top:0;line-height:43px;font-size:14.400px;color:#b89500">3</span>
</div>
<div class="abs" style="left:671.0px;top:42px;width:188.10000000000002px;height:42px;background:#2d2d2d;overflow:hidden;font-size:15px">
<span class="t ci" style="left:16.3px;top:0;line-height:46px">C<sup>#</sup></span>
<span class="t mw" style="left: 38.5px; top: 0px; line-height: 43px; color: rgb(204, 167, 0); letter-spacing: -0.316px;">RegisterDTO.cs</span>
<span class="t" style="left:145.5px;top:0;line-height:43px;font-size:14.400px;color:#b89500">3</span>
</div>
<div class="abs" style="left:860.1px;top:42px;width:226.9999999999999px;height:42px;background:#2d2d2d;overflow:hidden;font-size:15px">
<span class="t ci" style="left:16.3px;top:0;line-height:46px">C<sup>#</sup></span>
<span class="t mw" style="left: 38.5px; top: 0px; line-height: 43px; color: rgb(204, 167, 0); letter-spacing: 0.246px;">AccountController.cs</span>
<span class="t" style="left:186.0px;top:0;line-height:43px;font-size:14.400px;color:#b89500">7</span>
</div>
<div class="abs" style="left:1088.1px;top:42px;width:248.0px;height:42px;background:#2d2d2d;overflow:hidden;font-size:15px">
<span class="t ci" style="left:16.3px;top:0;line-height:46px">C<sup>#</sup></span>
<span class="t mw" style="left: 38.5px; top: 0px; line-height: 43px; color: rgb(150, 150, 150); letter-spacing: 0.281px;">AppIdentityDbContext .cs</span>
</div>
<div class="abs" style="left:1337.1px;top:42px;width:142.5px;height:42px;background:#2d2d2d;overflow:hidden;font-size:15px">
<span class="t ci" style="left:16.3px;top:0;line-height:46px">C<sup>#</sup></span>
<span class="t mw" style="left: 38.5px; top: 0px; line-height: 43px; color: rgb(204, 167, 0); letter-spacing: -0.48px;">Users.cs</span>
<span class="t" style="left:101.5px;top:0;line-height:43px;font-size:14.400px;color:#b89500">2</span>
</div>
<div class="abs" style="left:1480.6px;top:42px;width:158.5px;height:42px;background:#2d2d2d;overflow:hidden;font-size:15px">
<span class="t ci" style="left:16.3px;top:0;line-height:46px">C<sup>#</sup></span>
<span class="t mw" style="left: 38.5px; top: 0px; line-height: 43px; color: rgb(204, 167, 0); letter-spacing: -0.17px;">Address.cs</span>
<span class="t" style="left:116.0px;top:0;line-height:43px;font-size:14.400px;color:#b89500">5</span>
</div>
<div class="abs" style="left:1640.1px;top:42px;width:184.5px;height:42px;background:#2d2d2d;overflow:hidden;font-size:15px">
<span class="t js" style="left:16.300px;top:0;line-height:43px">{}</span>
<span class="t mw" style="left: 38.5px; top: 0px; line-height: 43px; color: rgb(150, 150, 150); letter-spacing: 0.225px;">appsettings.json</span>
</div>
<div class="abs" style="left:1825.6px;top:42px;width:17.0px;height:42px;background:#2d2d2d;overflow:hidden;font-size:15px">
<span class="t ci" style="left:16.3px;top:0;line-height:46px">C<sup>#</sup></span>
</div>
<svg viewBox="0 0 16 16" width="19.2" height="19.2" fill="currentColor" style="position:absolute;left:1852.4px;top:53.2px;color:#d4d4d4;overflow:visible;"><path d="M14 1H3L2 2v11l1 1h11l1-1V2l-1-1zM8 13H3V2h5v11zm6 0H9V2h5v11z"></path></svg>
<svg viewBox="0 0 16 16" width="19.2" height="19.2" fill="currentColor" style="position:absolute;left:1883px;top:53px;color:#d4d4d4;overflow:visible;"><circle cx="3" cy="8" r="1.15"></circle><circle cx="8" cy="8" r="1.15"></circle><circle cx="13" cy="8" r="1.15"></circle></svg>
<svg viewBox="0 0 16 16" width="14.5" height="14.5" fill="currentColor" style="position:absolute;left:376.3px;top:90px"><path fill="#41535b" d="M8 .800l7.200 7.200L8 15.200L.800 8z"></path><g stroke="#2a2a2e" stroke-width="1.100" fill="#2a2a2e"><path d="M6.200 4.600l3.600 3.600M8 6.400v4.200" fill="none"></path><circle cx="8" cy="6.300" r=".900"></circle><circle cx="8" cy="10.700" r=".900"></circle><circle cx="10" cy="8.300" r=".900"></circle></g></svg>
<span class="t mw" style="left: 398.3px; top: 84px; line-height: 27px; font-size: 15px; color: rgb(169, 169, 169); letter-spacing: 0.468px;">.gitignore</span>
<div class="abs" style="left:353px;top:110.400px;width:1567px;height:715.600px;overflow:hidden">
<div class="abs" style="left:-353px;top:-110.400px;width:1920px;height:1032px">
<div class="ln" style="top:96.60000000000001px">3</div>
<div class="cl cm" style="top:96.60000000000001px">##</div>
<div class="ln" style="top:119.4px">4</div>
<div class="cl cm" style="top:119.4px">## Get latest from <span style="text-decoration:underline;text-decoration-thickness:1px;text-underline-offset:5.500px">https://github.com/github/gitignore/blob/main/VisualStudio.gitignore</span></div>
<div class="ln" style="top:142.20000000000002px">5</div>
<div class="ln" style="top:165.0px">6</div>
<div class="cl cm" style="top:165.0px"># User-specific files</div>
<div class="ln" style="top:187.8px">7</div>
<div class="cl " style="top:187.8px">*.rsuser</div>
<div class="ln" style="top:210.60000000000002px">8</div>
<div class="cl " style="top:210.60000000000002px">*.suo</div>
<div class="ln" style="top:233.4px">9</div>
<div class="cl " style="top:233.4px">*.user</div>
<div class="ln" style="top:256.20000000000005px">10</div>
<div class="cl " style="top:256.20000000000005px">*.userosscache</div>
<div class="ln" style="top:279.0px">11</div>
<div class="cl " style="top:279.0px">*.sln.docstates</div>
<div class="ln" style="top:301.8px">12</div>
<div class="ln" style="top:324.6px">13</div>
<div class="cl cm" style="top:324.6px"># User-specific files (MonoDevelop/Xamarin Studio)</div>
<div class="ln" style="top:347.4px">14</div>
<div class="cl " style="top:347.4px">*.userprefs</div>
<div class="ln" style="top:370.20000000000005px">15</div>
<div class="ln" style="top:393.0px">16</div>
<div class="cl cm" style="top:393.0px"># Mono auto generated files</div>
<div class="ln" style="top:415.80000000000007px">17</div>
<div class="cl " style="top:415.80000000000007px">mono_crash.*</div>
<div class="ln" style="top:438.6px">18</div>
<div class="ln" style="top:461.4px">19</div>
<div class="cl cm" style="top:461.4px"># Build results</div>
<div class="ln" style="top:484.20000000000005px">20</div>
<div class="cl " style="top:484.20000000000005px">[Dd]ebug/</div>
<div class="ln" style="top:507.0px">21</div>
<div class="cl " style="top:507.0px">[Dd]ebugPublic/</div>
<div class="ln" style="top:529.8000000000001px">22</div>
<div class="cl " style="top:529.8000000000001px">[Rr]elease/</div>
<div class="ln" style="top:552.6px">23</div>
<div class="cl " style="top:552.6px">[Rr]eleases/</div>
<div class="ln" style="top:575.4px">24</div>
<div class="cl " style="top:575.4px">x64/</div>
<div class="ln" style="top:598.2px">25</div>
<div class="cl " style="top:598.2px">x86/</div>
<div class="ln" style="top:621.0px">26</div>
<div class="cl " style="top:621.0px">[Ww][Ii][Nn]32/</div>
<div class="ln" style="top:643.8px">27</div>
<div class="cl " style="top:643.8px">[Aa][Rr][Mm]/</div>
<div class="ln" style="top:666.6px">28</div>
<div class="cl " style="top:666.6px">[Aa][Rr][Mm]64/</div>
<div class="ln" style="top:689.4px">29</div>
<div class="cl " style="top:689.4px">bld/</div>
<div class="ln" style="top:712.2px">30</div>
<div class="cl " style="top:712.2px">[Bb]in/</div>
<div class="ln" style="top:735.0px">31</div>
<div class="cl " style="top:735.0px">[Oo]bj/</div>
<div class="ln" style="top:757.8px">32</div>
<div class="cl " style="top:757.8px">[Ll]og/</div>
<div class="ln" style="top:780.6px">33</div>
<div class="cl " style="top:780.6px">[Ll]ogs/</div>
<div class="ln" style="top:803.4px">34</div>
</div>
<div class="abs" style="left:0;top:0;width:1549px;height:4px;background:linear-gradient(#00000066,#0000004d 40%,#00000000)"></div>
</div>
<div class="abs" style="left:1902.500px;top:110.400px;width:1px;height:715.6px;background:#343434"></div>
<div class="abs" style="left:1903px;top:114px;width:17px;height:42.700px;background:#424242"></div>
<div class="abs" style="left:1903px;top:177.500px;width:17px;height:1.500px;background:#8a8a8a"></div>
<div class="abs" style="left:1908.800px;top:175px;width:6px;height:6px;background:#8e8e8e"></div>
<div class="abs" style="left:1908.800px;top:207px;width:6px;height:6px;background:#8e8e8e"></div>
<div class="abs" style="left:1908.800px;top:316px;width:6px;height:6px;background:#8e8e8e"></div>
<div class="abs" style="left:1908.800px;top:329px;width:6px;height:6px;background:#8e8e8e"></div>
<div class="abs" style="left:1908.800px;top:367px;width:6px;height:6px;background:#8e8e8e"></div>
<div class="abs" style="left:1908.800px;top:419px;width:6px;height:6px;background:#8e8e8e"></div>
<div class="abs" style="left:1908.800px;top:506px;width:6px;height:6px;background:#8e8e8e"></div>
<div class="abs" style="left:1908.800px;top:547px;width:6px;height:9px;background:#8e8e8e"></div>
<svg width="9" height="18" viewBox="0 0 9 18" shape-rendering="crispEdges" style="position:absolute;left:890px;top:670px"><g fill="#141414"><rect x="0" y="0" width="9" height="3"></rect><rect x="0" y="15" width="9" height="3"></rect><rect x="3" y="1" width="3" height="16"></rect></g><g fill="#f2f2f2"><rect x="4" y="1" width="1" height="16"></rect><rect x="1" y="1" width="3" height="1"></rect><rect x="5" y="1" width="3" height="1"></rect><rect x="1" y="16" width="3" height="1"></rect><rect x="5" y="16" width="3" height="1"></rect></g></svg>
<div class="abs" style="left:353px;top:826px;width:1567px;height:1px;background:#414141"></div>
<span class="t mw" style="left: 376.75px; top: 841.5px; font-size: 12.6px; color: rgb(150, 150, 150); letter-spacing: -0.719px;">PROBLEMS</span>
<span class="t mw" style="left: 505.5px; top: 841.5px; font-size: 12.6px; color: rgb(150, 150, 150); letter-spacing: -0.38px;">OUTPUT</span>
<span class="t mw" style="left: 584.25px; top: 841.5px; font-size: 12.6px; color: rgb(150, 150, 150); letter-spacing: -0.567px;">DEBUG CONSOLE</span>
<span class="t mw" style="left: 715.5px; top: 841.5px; font-size: 12.6px; color: rgb(231, 231, 231); letter-spacing: -0.242px;">TERMINAL</span>
<span class="t mw" style="left: 805.5px; top: 841.5px; font-size: 12.6px; color: rgb(150, 150, 150); letter-spacing: -0.931px;">PORTS</span>
<div class="abs" style="left:453px;top:837px;width:25.800px;height:21px;border-radius:11px;background:#4d4d4d;color:#fff;font-size:13.200px;text-align:center;line-height:21.500px">22</div>
<div class="abs" style="left:713px;top:863px;width:66px;height:1.200px;background:#e7e7e7"></div>
<svg viewBox="0 0 16 16" width="21" height="21" fill="currentColor" style="position:absolute;left:1587px;top:837.5px;color:#c5c5c5;overflow:visible;"><g fill="none" stroke="currentColor" stroke-width="1" stroke-linejoin="round"><path d="M3 2.500h12l-2 11h-12z"></path><path d="M5 5.500l3.300 2.600l-4 2.600M8.500 11h3"></path></g></svg>
<span class="t mw" style="left: 1612.9px; top: 840.8px; font-size: 13.8px; color: rgb(204, 167, 0); letter-spacing: -0.355px;">powershell</span>
<svg viewBox="0 0 16 16" width="19.5" height="19.5" fill="currentColor" style="position:absolute;left:1680px;top:837.5px;color:#cca700;overflow:visible;"><path d="M7.560 1h.880l6.540 12.260l-.440.740H1.440L1 13.260L7.560 1zM8 2.280L2.280 13H13.700L8 2.280zM8.625 12v-1h-1.250v1h1.250zm-1.250-2V6h1.250v4h-1.250z"></path></svg>
<svg viewBox="0 0 16 16" width="19.2" height="19.2" fill="currentColor" style="position:absolute;left:1710.5px;top:838px;color:#c5c5c5;overflow:visible;"><path d="M14 7v1H8v6H7V8H1V7h6V1h1v6h6z"></path></svg>
<svg viewBox="0 0 16 16" width="16" height="16" fill="currentColor" style="position:absolute;left:1732px;top:839.5px;color:#c5c5c5;overflow:visible;"><path stroke="currentColor" stroke-width=".25" d="M7.976 10.072l4.357-4.357l.62.618L8.284 11h-.618L3 6.333l.619-.618l4.357 4.357z"></path></svg>
<svg viewBox="0 0 16 16" width="19.2" height="19.2" fill="currentColor" style="position:absolute;left:1758.5px;top:837.8px;color:#c5c5c5;overflow:visible;"><path d="M14 1H3L2 2v11l1 1h11l1-1V2l-1-1zM8 13H3V2h5v11zm6 0H9V2h5v11z"></path></svg>
<svg viewBox="0 0 16 16" width="19.2" height="19.2" fill="currentColor" style="position:absolute;left:1789px;top:838px;color:#c5c5c5;overflow:visible;"><path d="M10 3h3v1h-1v9l-1 1H4l-1-1V4H2V3h3V2a1 1 0 0 1 1-1h3a1 1 0 0 1 1 1v1zM9 2H6v1h3V2zM4 13h7V4H4v9zm2-8H5v7h1V5zm1 0h1v7H7V5zm2 0h1v7H9V5z"></path></svg>
<svg viewBox="0 0 16 16" width="19.2" height="19.2" fill="currentColor" style="position:absolute;left:1820.5px;top:838px;color:#c5c5c5;overflow:visible;"><circle cx="3" cy="8" r="1.15"></circle><circle cx="8" cy="8" r="1.15"></circle><circle cx="13" cy="8" r="1.15"></circle></svg>
<svg viewBox="0 0 16 16" width="19.2" height="19.2" fill="currentColor" style="position:absolute;left:1852px;top:838.5px;color:#c5c5c5;overflow:visible;"><path stroke="currentColor" stroke-width=".25" d="M8.024 5.928l-4.357 4.357l-.62-.618L7.716 5h.618L13 9.667l-.619.618l-4.357-4.357z"></path></svg>
<svg viewBox="0 0 16 16" width="19.2" height="19.2" fill="currentColor" style="position:absolute;left:1882.7px;top:838px;color:#c5c5c5;overflow:visible;"><path d="M8 8.707l3.646 3.647l.708-.707L8.707 8l3.647-3.646l-.707-.708L8 7.293L4.354 3.646l-.707.708L7.293 8l-3.646 3.646l.707.708L8 8.707z"></path></svg>
<div class="tl" style="top:885.8px">   84182d8..e2ea1ad  main       -&gt; origin/main</div>
<div class="tl" style="top:905.8px">Updating 84182d8..e2ea1ad</div>
<div class="tl" style="top:925.8px">Fast-forward</div>
<div class="tl" style="top:945.8px"> readme.md | 68 <span style="color:#0dbc79">+++++++++++++++++++++++++++++++++++++++</span><span style="color:#cd3131">------------------------</span></div>
<div class="tl" style="top:965.8px"> 1 file changed, 42 insertions(+), 26 deletions(-)</div>
<div class="tl" style="top:985.8px">PS D:\2WarRoom\2023NET_AngularLogin&gt; </div>
<div class="abs" style="left:710px;top:984px;width:9.200px;height:18.500px;border:1px solid #d0d0d0"></div>
<div class="abs" style="left:361.500px;top:988.500px;width:9.500px;height:9.500px;border-radius:50%;border:1.800px solid #858585"></div>
<div class="abs" style="left:1907.800px;top:895px;width:4.300px;height:7px;background:#1a85c4"></div>
<div class="abs" style="left:1907.800px;top:905.7px;width:4.300px;height:7.099999999999909px;background:#1a85c4"></div>
<div class="abs" style="left:1907.800px;top:934.75px;width:4.300px;height:7.25px;background:#1a85c4"></div>
<div class="abs" style="left:1907.800px;top:978px;width:4.300px;height:20px;background:#1a85c4"></div>
<div class="abs" style="left:1907.800px;top:998px;width:4.300px;height:5px;background:#5aa3cf"></div>
<div class="abs" style="left:1916px;top:903.8px;width:4px;height:7.0px;background:#f14c4c"></div>
<div class="abs" style="left:1916px;top:915px;width:4px;height:14.700000000000045px;background:#f14c4c"></div>
<div class="abs" style="left:1916px;top:935px;width:4px;height:7px;background:#f14c4c"></div>
<div class="abs" style="left:1916px;top:952px;width:4px;height:25.5px;background:#f14c4c"></div>
<div class="abs" style="left:1916px;top:979.4px;width:4px;height:6.600000000000023px;background:#f14c4c"></div>
<div class="abs" style="left:1916px;top:993.8px;width:4px;height:7.2000000000000455px;background:#f14c4c"></div>
<div class="abs" style="left:0;top:1005.600px;width:1920px;height:26.400px;background:#007acc"></div>
<div class="abs" style="left:0;top:1005.600px;width:41.250px;height:26.400px;background:#16825d"></div>
<svg width="42" height="27" viewBox="0 0 42 27" style="position:absolute;left:0;top:1005px"><path d="M15.300 10.300l5.300 4.700l-5.300 4.700M26 5.200l-5.300 4.700l5.300 4.700" fill="none" stroke="#fff" stroke-width="1.400"></path></svg>
<svg viewBox="0 0 16 16" width="17" height="17" fill="currentColor" style="position:absolute;left:47.5px;top:1009.2px;color:#fff;overflow:visible;stroke:#fff;stroke-width:.35px"><path transform="scale(.6667)" d="M21.007 8.222A3.738 3.738 0 0 0 15.045 5.2a3.737 3.737 0 0 0 1.156 6.583a2.988 2.988 0 0 1-2.668 1.67h-2.99a4.456 4.456 0 0 0-2.989 1.165V7.4a3.737 3.737 0 1 0-1.494 0v9.117a3.776 3.776 0 1 0 1.816.099a2.99 2.99 0 0 1 2.668-1.667h2.99a4.484 4.484 0 0 0 4.223-3.039a3.736 3.736 0 0 0 3.25-3.687zM4.565 3.738a2.242 2.242 0 1 1 4.484 0a2.242 2.242 0 0 1-4.484 0zm4.484 16.441a2.242 2.242 0 1 1-4.484 0a2.242 2.242 0 0 1 4.484 0zm8.221-9.715a2.242 2.242 0 1 1 0-4.485a2.242 2.242 0 0 1 0 4.485z"></path></svg>
<span class="sb mw" style="left: 68.75px; letter-spacing: 0.012px;">main</span>
<span class="sb mw" style="left: 162px; letter-spacing: -0.516px;">0</span>
<span class="sb mw" style="left: 195px; letter-spacing: -0.758px;">22</span>
<span class="sb mw" style="left: 249.5px; letter-spacing: -0.516px;">0</span>
<span class="sb mw" style="left: 276.25px; letter-spacing: -0.339px;">Projects: 1</span>
<span class="sb mw" style="left: 1380px; letter-spacing: -0.316px;">Ln 50, Col 12</span>
<span class="sb mw" style="left: 1481px; letter-spacing: -0.622px;">Spaces: 4</span>
<span class="sb mw" style="left: 1558.6px; letter-spacing: -0.596px;">UTF-8</span>
<span class="sb mw" style="left: 1616px; letter-spacing: -1.548px;">CRLF</span>
<span class="sb mw" style="left: 1666.3px; letter-spacing: 0.148px;">Ignore</span>
<span class="sb mw" style="left: 1820px; letter-spacing: 0.001px;">Prettier</span>
<svg viewBox="0 0 16 16" width="17" height="17" fill="currentColor" style="position:absolute;left:107.5px;top:1009.2px;color:#fff;overflow:visible;"><g fill="none" stroke="currentColor" stroke-width="1.4"><path d="M2.600 8.600a5.500 5.500 0 0 1 10.200-3.200M13.400 7.400a5.500 5.500 0 0 1-10.200 3.200"></path><path d="M.6 6.600l2.1 2.100l2.200-2.100M15.400 9.400l-2.100-2.100l-2.200 2.100"></path></g></svg>
<svg viewBox="0 0 16 16" width="17" height="17" fill="currentColor" style="position:absolute;left:140.8px;top:1009.2px;color:#fff;overflow:visible;"><g fill="none" stroke="currentColor" stroke-width="1.3"><circle cx="8" cy="8" r="6.3"></circle><path d="M5.2 5.2l5.6 5.6M10.8 5.2l-5.6 5.6"></path></g></svg>
<svg viewBox="0 0 16 16" width="17" height="17" fill="currentColor" style="position:absolute;left:173.5px;top:1009px;color:#fff;overflow:visible;stroke:#fff;stroke-width:.35px"><path d="M7.560 1h.880l6.540 12.260l-.440.740H1.440L1 13.260L7.560 1zM8 2.280L2.280 13H13.700L8 2.280zM8.625 12v-1h-1.250v1h1.250zm-1.250-2V6h1.250v4h-1.250z"></path></svg>
<svg viewBox="0 0 16 16" width="17" height="17" fill="currentColor" style="position:absolute;left:229px;top:1009px;color:#fff;overflow:visible;"><g fill="none" stroke="currentColor" stroke-width="1.3"><circle cx="8" cy="5.5" r="1.5" fill="currentColor"></circle><path d="M8 7v2M5 14.500l3-6.500l3 6.500M6 12.500h4M4.800 2.300a4.600 4.600 0 0 0 0 6.400M11.200 2.300a4.600 4.600 0 0 1 0 6.400M2.700 .8a7 7 0 0 0 0 9.400M13.300 .8a7 7 0 0 1 0 9.400"></path></g></svg>
<svg viewBox="0 0 16 16" width="19" height="19" fill="currentColor" style="position:absolute;left:1725.5px;top:1009.5px;color:#fff;overflow:visible;"><g><path fill-rule="evenodd" d="M8 2.500c-1-.900-2.900-1.200-4.200-.600C2.500 2.500 2.200 4 2.500 5.500c-.900.800-1.700 1.900-1.700 3v2.300c1.500 1.800 4.200 3.200 7.200 3.200s5.700-1.400 7.200-3.200V8.500c0-1.100-.800-2.200-1.700-3c.3-1.500 0-3-1.300-3.600C10.900 1.300 9 1.600 8 2.500zM4.300 3.200c.9-.3 2 0 2.500.600c.3.500.3 1.300 0 1.900c-.5.700-1.600 1-2.600.600c-.7-.500-.700-2.400.1-3.100zm7.400 0c.8.700.8 2.600.1 3.100c-1 .4-2.100.100-2.600-.600c-.3-.600-.3-1.400 0-1.900c.5-.600 1.600-.900 2.500-.600zM3 8h10v3.500c-1.400 1-3.200 1.500-5 1.500s-3.600-.5-5-1.500z"></path><rect x="5.500" y="8.800" width="1.300" height="2.700" rx=".5"></rect><rect x="9.200" y="8.800" width="1.300" height="2.700" rx=".5"></rect></g></svg>
<svg viewBox="0 0 16 16" width="18" height="18" fill="currentColor" style="position:absolute;left:1762.5px;top:1009px;color:#fff;overflow:visible;"><g><path fill="none" stroke="currentColor" stroke-width="1.100" stroke-linejoin="round" d="M8 1l6 3.400v7.200L8 15l-6-3.400V4.400z"></path><rect x="4.300" y="5.800" width="7.400" height="4.400" rx="1"></rect></g></svg>
<svg viewBox="0 0 16 16" width="17.5" height="17.5" fill="currentColor" style="position:absolute;left:1798.5px;top:1010px;color:#fff;overflow:visible;"><g fill="none" stroke="currentColor" stroke-width="1.4"><circle cx="8" cy="8" r="6.300"></circle><path d="M3.600 12.400l8.800-8.800"></path></g></svg>
<svg viewBox="0 0 16 16" width="18" height="18" fill="currentColor" style="position:absolute;left:1885px;top:1009px;color:#fff;overflow:visible;"><g fill="none" stroke="currentColor" stroke-width="1.3" stroke-linejoin="round"><path d="M3 12.500l.8-2.300V6.500a4.200 4.200 0 0 1 8.400 0v3.700l.8 2.300z"></path><path d="M6.500 12.700a1.500 1.500 0 0 0 3 0"></path></g><circle cx="12.400" cy="3.300" r="3"></circle></svg>
<svg width="1920" height="1032" viewBox="0 0 1920 1032" style="position:absolute;left:0;top:0;pointer-events:none">
<rect x="70.35" y="819.15" width="207.6" height="29.6" rx="3" ry="3" fill="none" stroke="#fb0a32" stroke-width="4.3"></rect>
<path d="M296 809.5L424.2 406" fill="none" stroke="#fb0a32" stroke-width="3.9"></path>
<path d="M429.9 386.4L415.4 406.7L425.3 405.5L430.9 410.9z" fill="#fb0a32"></path>
</svg>

</body></html>
